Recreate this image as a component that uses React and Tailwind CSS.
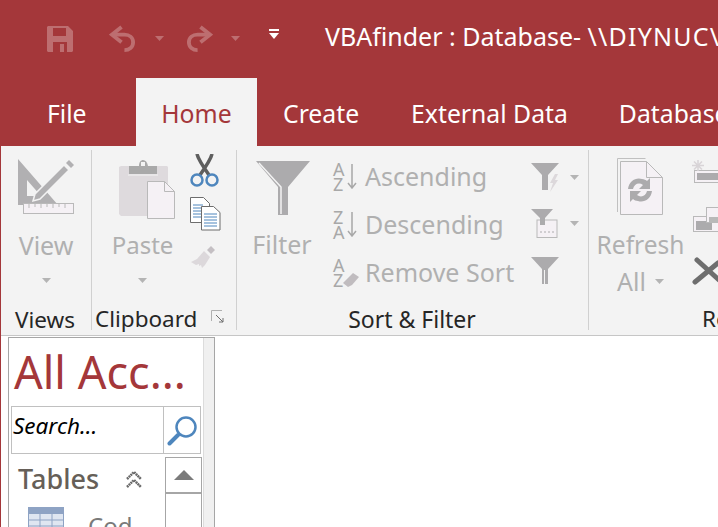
import React from 'react';

const FONT = "font-['Noto_Sans','Open_Sans',sans-serif]";

// --- small shared bits ---
const Caret = ({ className = '' }) => (
  <svg width="9" height="5" viewBox="0 0 9 5" className={`shrink-0 ${className}`}><path d="M0 0h9L4.500 5z" fill="#b4b4b4" /></svg>
);

const TitleCaret = ({ className = '' }) => (
  <svg width="9" height="5" viewBox="0 0 9 5" className={`shrink-0 ${className}`}><path d="M0 0h9L4.500 5z" fill="#bd6e70" /></svg>
);

const Separator = () => <div className="w-px h-[180px] mt-1 bg-[#d0d0d0] shrink-0" />;

const GroupLabel = ({ children, className = '' }) => (
  <div className={`text-[22.500px] leading-[30px] text-[#262626] whitespace-nowrap ${className}`}>{children}</div>
);

// --- title bar icons ---
const SaveIcon = () => (
  <svg width="26" height="26" viewBox="0 0 26 26" className="shrink-0">
    <path fillRule="evenodd" d="M1 0h20l5 5v20l-1 1H1l-1-1V1zM6 2v8h13V2zM6 16v10h14V16z" fill="#bd6e70" />
    <rect x="13" y="18" width="4" height="8" fill="#bd6e70" />
  </svg>
);

const UndoIcon = ({ flip, className = '' }) => (
  <svg width="27" height="27" viewBox="0 0 28 28" className={`shrink-0 ${flip ? '-scale-x-100' : ''} ${className}`} fill="none" stroke="#bd6e70" strokeWidth="4">
    <path d="M13 2L3 10l10 8" />
    <path d="M3 10h13c5 0 9 3 9 8s-4 8-9 8" />
  </svg>
);

const QatMore = ({ className = '' }) => (
  <svg width="10" height="10" viewBox="0 0 10 10" className={`shrink-0 ${className}`}><rect y="0" width="10" height="2" fill="#fff" /><path d="M0 4h10L5 10z" fill="#fff" /></svg>
);

// --- ribbon icons ---
const ViewIcon = () => (
  <svg width="58" height="62" viewBox="0 0 58 62">
    <path d="M1 1l40 46H1zM10 22v16h14z" fill="#b1b0b2" fillRule="evenodd" />
    <path d="M52 2l5 5-3 3-5-5z" fill="#b1b0b2" />
    <path d="M47 7l5 5-29 29-7 2 2-7z" fill="#b1b0b2" stroke="#f3f3f3" strokeWidth="1.500" />
    <rect x="6.500" y="45.500" width="50" height="10" fill="#f5f1f5" stroke="#b9b9b9" />
    <path d="M12 46v4M18 46v3M24 46v4M30 46v3M36 46v4M42 46v3M48 46v4" stroke="#b9b9b9" />
  </svg>
);

const PasteIcon = () => (
  <svg width="58" height="62" viewBox="0 0 58 62">
    <path d="M3 8h46l1 1v47l-2 2H3l-2-2V9z" fill="#dedadd" />
    <path d="M11 16V8h10c0-8 8-8 9 0h9v8z" fill="#a9a9a9" />
    <path d="M10 17h30" stroke="#f3f3f3" />
    <rect x="23" y="4" width="4" height="4" fill="#f3f3f3" />
    <path d="M29.500 23.500h17l10 10v27h-27z" fill="#f5f1f5" stroke="#b9b9b9" />
    <path d="M46.500 23.500v10h10" fill="none" stroke="#b9b9b9" />
  </svg>
);

const Scissors = () => (
  <svg width="30" height="34" viewBox="0 0 30 34" fill="none" className="shrink-0">
    <path d="M7 0c1 5 5 11 12 21M22 0c-1 5-5 11-12 21" stroke="#5e5e5e" strokeWidth="3.500" />
    <circle cx="7" cy="26" r="5.500" stroke="#4e86bd" strokeWidth="2.500" />
    <circle cx="22" cy="26" r="5.500" stroke="#4e86bd" strokeWidth="2.500" />
  </svg>
);

const CopyIcon = () => (
  <svg width="31" height="34" viewBox="0 0 31 34">
    <path d="M.500.500h13l6 6v19H.500z" fill="#fff" stroke="#6d6d6d" />
    <path d="M3 8h10M3 11h10M3 14h10M3 17h10M3 20h10" stroke="#4e86bd" />
    <path d="M11.500 9.500h12l6.500 6v17.500H11.500z" fill="#fff" stroke="#6d6d6d" />
    <path d="M14 17h13M14 20h13M14 23h13M14 26h13M14 29h13" stroke="#4e86bd" />
  </svg>
);

const BrushIcon = () => (
  <svg width="26" height="24" viewBox="0 0 26 24">
    <path d="M17 5l4-4 4 4-4 4z" fill="#c4bfc3" />
    <path d="M14 6l6 6-5 8-3 3-1-3-2 1v-2l-3 1-5-3 6-3z" fill="#dcd8db" />
  </svg>
);

const Launcher = () => (
  <svg width="14" height="14" viewBox="0 0 14 14" fill="none">
    <path d="M.500 11V.500H11" stroke="#b0b0b0" />
    <path d="M5 5l7 7M12 8v4H8" stroke="#6e6e6e" />
  </svg>
);

const BigFunnel = () => (
  <svg width="56" height="56" viewBox="0 0 56 56">
    <path d="M1 1h54L33 27v28H23V27z" fill="#acabad" />
    <path d="M4 3l22 24v27" fill="none" stroke="#f3f3f3" strokeWidth="1.500" />
  </svg>
);

const SmallFunnel = () => (
  <svg width="28" height="28" viewBox="0 0 28 28" className="shrink-0">
    <path d="M0 1h28L17 13v15h-6V13z" fill="#acabad" />
    <path d="M13.500 14v14" stroke="#f3f3f3" />
  </svg>
);

const FunnelBolt = () => (
  <svg width="30" height="30" viewBox="0 0 30 30" className="shrink-0">
    <path d="M0 1h28L17 13v15h-6V13z" fill="#acabad" />
    <path d="M24 12l-5 9h3l-3 9 8-12h-3l3-6z" fill="#dcd8db" />
  </svg>
);

const FunnelForm = () => (
  <svg width="28" height="30" viewBox="0 0 28 30" className="shrink-0">
    <rect x="6" y="12" width="20" height="17.500" fill="#f5f1f5" stroke="#b9b9b9" />
    <path d="M0 1h22l-8 9v7H9v-7z" fill="#acabad" />
    <path d="M9 24h14" stroke="#acabad" strokeDasharray="2 2" />
  </svg>
);

const SortLetters = ({ top, bottom, eraser }) => (
  <div className="relative w-[26px] h-[32px] shrink-0">
    <div className={`absolute left-[1px] top-[2px] text-[18px] leading-[14px] text-[#a8a8a8] ${FONT}`}>{top}</div>
    <div className={`absolute left-[1px] top-[17px] text-[18px] leading-[14px] text-[#a8a8a8] ${FONT}`}>{bottom}</div>
    {eraser ? (
      <svg width="16" height="14" viewBox="0 0 16 14" className="absolute left-[11px] top-[17px]">
        <path d="M10 0l6 4-7 8-4 2-5-4z" fill="#c0bcbf" />
      </svg>
    ) : (
      <svg width="10" height="25" viewBox="0 0 10 25" className="absolute left-[15px] top-[4px]" fill="none" stroke="#a8a8a8" strokeWidth="1.500">
        <path d="M5 0v24M1 19l4 5 4-5" />
      </svg>
    )}
  </div>
);

const SortRow = ({ top, bottom, eraser, label }) => (
  <div className="flex items-center gap-[7px] h-[48px]">
    <SortLetters top={top} bottom={bottom} eraser={eraser} />
    <span className="text-[#b0b0b0] text-[25px] leading-[32px] whitespace-nowrap">{label}</span>
  </div>
);

const RefreshIcon = () => (
  <svg width="46" height="60" viewBox="0 0 46 60">
    <path d="M.500 54V.500h28" fill="none" stroke="#c0c0c0" />
    <path d="M3.500 3.500h26l16 16v37h-42z" fill="#f5f1f5" stroke="#b9b9b9" />
    <path d="M29.500 3.500v16h16" fill="none" stroke="#b9b9b9" />
    <path d="M11 31c1-8 8-12 14-10 2 0 4 1 5 2l3-3v11H22l4-4c-4-3-9-1-10 4zM35 33c-1 8-8 12-14 10-2 0-4-1-5-2l-3 3V33h11l-4 4c4 3 9 1 10-4z" fill="#acabad" />
  </svg>
);

const NewRecord = () => (
  <svg width="26" height="24" viewBox="0 0 26 24">
    <rect x="2.500" y="10.500" width="30" height="12" fill="#f5f1f5" stroke="#b9b9b9" />
    <rect x="5" y="13" width="28" height="7" fill="#acabad" />
    <path d="M6 0v11M0 5.500h12M2 1.500l8 8M10 1.500l-8 8" stroke="#d8d4d7" strokeWidth="1.500" />
  </svg>
);

const SaveRecord = () => (
  <svg width="26" height="26" viewBox="0 0 26 26">
    <rect x="1.500" y="9.500" width="30" height="15" fill="#f5f1f5" stroke="#b9b9b9" />
    <rect x="4" y="14" width="16" height="9" fill="#acabad" />
    <rect x="14.500" y=".500" width="16" height="15" fill="#f5f1f5" stroke="#b9b9b9" />
    <rect x="17" y="10" width="10" height="6" fill="#b9b9b9" />
  </svg>
);

const DeleteIcon = () => (
  <svg width="26" height="32" viewBox="0 0 26 32" fill="none" stroke="#6e6e6e" strokeWidth="5" strokeLinecap="round">
    <path d="M3 27L26 8M5 5l22 20" />
  </svg>
);

// --- nav pane icons ---
const SearchGlass = () => (
  <svg width="31" height="31" viewBox="0 0 31 31" fill="none">
    <circle cx="19" cy="12" r="9.500" stroke="#4e86bd" strokeWidth="2.500" />
    <path d="M11 20L2.500 28.500" stroke="#4e86bd" strokeWidth="4" strokeLinecap="round" />
  </svg>
);

const Chevrons = () => (
  <svg width="16" height="18" viewBox="0 0 16 18" fill="none" stroke="#6b6b6b" strokeWidth="2.500" strokeDasharray="2 .5" className="shrink-0">
    <path d="M1 9l7-7 7 7M1 17l7-7 7 7" />
  </svg>
);

const TableIcon = () => (
  <svg width="36" height="22" viewBox="0 0 36 22" className="shrink-0">
    <rect x=".500" y=".500" width="35" height="24" fill="#dfe6f1" stroke="#8ea3c4" />
    <rect x="1" y="1" width="34" height="6" fill="#8ea3c4" />
    <path d="M12 1v22M24 1v22M1 13h34M1 19h34" stroke="#8ea3c4" />
  </svg>
);

export default function App() {
  return (
    <div className={`w-[718px] h-[527px] overflow-hidden flex flex-col bg-[#a4373a] ${FONT}`}>
      {/* TITLE BAR */}
      <div className="h-[78px] flex items-center shrink-0 pl-[47px] pb-[1px] whitespace-nowrap overflow-hidden">
        <SaveIcon />
        <UndoIcon className="ml-[36px]" />
        <TitleCaret className="ml-[19px]" />
        <UndoIcon flip className="ml-[22px]" />
        <TitleCaret className="ml-[18px]" />
        <QatMore className="ml-[29px] mb-[10px]" />
        <div className="ml-[46px] text-white text-[25px] shrink-0 -mt-[3px]">VBAfinder : Database- <span className="tracking-[1.200px]">\\DIYNUC\</span></div>
      </div>

      {/* TABS */}
      <div className="h-[68px] flex items-stretch shrink-0 text-white text-[24.750px] whitespace-nowrap overflow-hidden">
        <div className="pl-[47px] w-[136px] pt-[17px] shrink-0">File</div>
        <div className="w-[121px] bg-[#f3f3f3] text-[#a4373a] text-center pt-[17px] shrink-0">Home</div>
        <div className="ml-[26px] pt-[17px] shrink-0">Create</div>
        <div className="ml-[52px] pt-[17px] shrink-0">External Data</div>
        <div className="ml-[51px] pt-[17px] shrink-0">Database Tools</div>
      </div>

      {/* RIBBON */}
      <div className="h-[190px] ml-px flex bg-[#f3f3f3] border-b border-[#c6c6c6] shrink-0">
        <div className="w-[90px] flex flex-col items-center shrink-0">
          <div className="mt-[12px]"><ViewIcon /></div>
          <div className="text-[#b0b0b0] text-[25px] leading-[32px] mt-[9px]">View</div>
          <Caret className="mt-[17px]" />
          <GroupLabel className="mt-[22px] -ml-[2px]">Views</GroupLabel>
        </div>
        <Separator />

        <div className="w-[144px] flex flex-col shrink-0">
          <div className="flex h-[158px]">
            <div className="w-[98px] flex flex-col items-center shrink-0">
              <div className="mt-[12px] ml-[12px]"><PasteIcon /></div>
              <div className="text-[#b0b0b0] text-[24px] leading-[32px] mt-[9px] ml-[3px]">Paste</div>
              <Caret className="mt-[17px] ml-[3px]" />
            </div>
            <div className="flex flex-col items-start">
              <div className="mt-[8px]"><Scissors /></div>
              <div className="mt-[9px]"><CopyIcon /></div>
              <div className="mt-[14px]"><BrushIcon /></div>
            </div>
          </div>
          <div className="flex items-center">
            <GroupLabel className="ml-[3px]">Clipboard</GroupLabel>
            <div className="ml-[14px] -mt-[4px] flex"><Launcher /></div>
          </div>
        </div>
        <Separator />

        <div className="w-[351px] flex flex-col shrink-0">
          <div className="flex h-[158px]">
            <div className="w-[95px] flex flex-col items-center shrink-0">
              <div className="mt-[14px] -ml-[4px]"><BigFunnel /></div>
              <div className="text-[#b0b0b0] text-[25px] leading-[32px] mt-[12px] -ml-[5px]">Filter</div>
            </div>
            <div className="w-[199px] pt-[6px] shrink-0">
              <SortRow top="A" bottom="Z" label="Ascending" />
              <SortRow top="Z" bottom="A" label="Descending" />
              <SortRow top="A" bottom="Z" eraser label="Remove Sort" />
            </div>
            <div className="flex flex-col pt-[16px]">
              <div className="flex items-center h-[30px] gap-[9px]"><FunnelBolt /><Caret /></div>
              <div className="flex items-center h-[30px] gap-[11px] mt-[16px]"><FunnelForm /><Caret /></div>
              <div className="mt-[18px]"><SmallFunnel /></div>
            </div>
          </div>
          <GroupLabel className="text-center -ml-[1px] text-[23px]">Sort &amp; Filter</GroupLabel>
        </div>
        <Separator />

        <div className="flex flex-col">
          <div className="flex h-[158px]">
            <div className="w-[103px] flex flex-col items-center shrink-0">
              <div className="mt-[12px] -ml-[1px]"><RefreshIcon /></div>
              <div className="text-[#b0b0b0] text-[24.500px] leading-[32px] mt-[11px]">Refresh</div>
              <div className="flex items-center gap-[9px] text-[#b0b0b0] text-[25px] leading-[32px] mt-[4px]">All <Caret /></div>
            </div>
            <div className="flex flex-col">
              <div className="mt-[14px]"><NewRecord /></div>
              <div className="mt-[23px]"><SaveRecord /></div>
              <div className="mt-[22px]"><DeleteIcon /></div>
            </div>
          </div>
          <GroupLabel className="ml-[113px]">Records</GroupLabel>
        </div>
      </div>

      {/* WORKSPACE */}
      <div className="flex-1 ml-px bg-white flex overflow-hidden">
        <div className="mt-[1px] ml-[7px] w-[207px] border-l border-t border-r border-[#a6a6a6] flex bg-white overflow-hidden">
          <div className="flex-1 min-w-0 flex flex-col">
            <div className="text-[#a4373a] text-[45px] leading-[58px] pl-[5px] mt-[5px] whitespace-nowrap">All Acc...</div>
            <div className="mt-[5px] ml-[2px] w-[190px] h-[48px] border border-[#c0c0c0] flex shrink-0 -mr-[4px]">
              <div className="w-[152px] border-r border-[#c0c0c0] italic text-black text-[22.500px] leading-[38px] pl-px">Search...</div>
              <div className="flex-1 flex items-center justify-center"><SearchGlass /></div>
            </div>
            <div className="flex flex-1 mt-[3px]">
              <div className="w-[156px] shrink-0">
                <div className="flex items-center pl-[9px] h-[44px]">
                  <span className="text-[#665f58] text-[27px] font-medium w-[108px] shrink-0">Tables</span>
                  <Chevrons />
                </div>
                <div className="flex pl-[19px] mt-[6px]">
                  <TableIcon />
                  <span className="ml-[24px] mt-[3px] text-[#7a7a7a] text-[24px] leading-[32px]">Cod</span>
                </div>
              </div>
              <div className="w-[37px] shrink-0 border border-[#a6a6a6] -mr-[4px] flex flex-col">
                <div className="h-[36px] border-b-2 border-[#a6a6a6] flex items-center justify-center">
                  <svg width="20" height="10" viewBox="0 0 20 10"><path d="M10 0l10 10H0z" fill="#7b7b7b" /></svg>
                </div>
              </div>
            </div>
          </div>
          <div className="w-[11px] bg-[#f0f0f0] shrink-0 border-l border-[#dcdcdc]" />
        </div>
      </div>
    </div>
  );
}
